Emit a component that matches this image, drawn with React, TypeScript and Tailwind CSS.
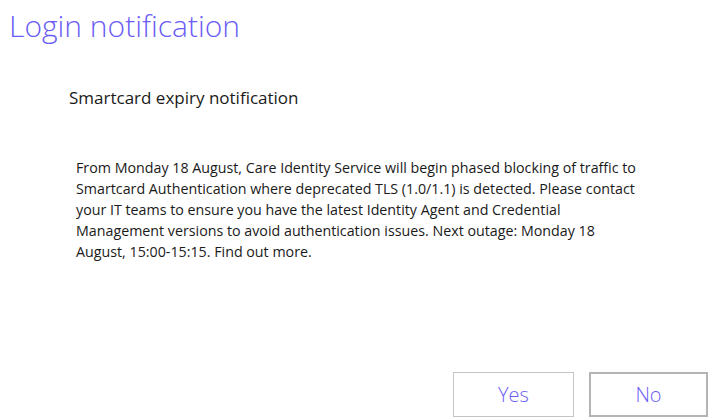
export default function App() {
  const lines = [
    "From Monday 18 August, Care Identity Service will begin phased blocking of traffic to",
    "Smartcard Authentication where deprecated TLS (1.0/1.1) is detected. Please contact",
    "your IT teams to ensure you have the latest Identity Agent and Credential",
    "Management versions to avoid authentication issues. Next outage: Monday 18",
    "August, 15:00-15:15. Find out more.",
  ];

  return (
    <div className="flex h-[417px] w-[714px] flex-col overflow-hidden bg-white font-['Open_Sans',sans-serif]">
      <h1 className="pl-[9px] pt-[6px] text-[30px] font-light leading-[40px] text-[#6a5cf5]">
        Login notification
      </h1>

      <h2 className="pl-[69px] pt-[40px] text-[17px] leading-[24px] text-[#1a1a1a]">
        Smartcard expiry notification
      </h2>

      <div className="pl-[76px] pt-[47px] text-[14.25px] leading-[21px] text-[#1a1a1a]">
        {lines.map((line) => (
          <p key={line} className="whitespace-nowrap">
            {line}
          </p>
        ))}
      </div>

      <div className="mt-auto flex justify-end gap-[15px] pr-[6px]">
        <button className="h-[45px] w-[121px] border border-[#c4c4c4] bg-white text-[20px] font-light text-[#6a5cf5]">
          Yes
        </button>
        <button className="h-[45px] w-[119px] border-2 border-[#b4b4b4] bg-white text-[20px] font-light text-[#6a5cf5]">
          No
        </button>
      </div>
    </div>
  );
}
